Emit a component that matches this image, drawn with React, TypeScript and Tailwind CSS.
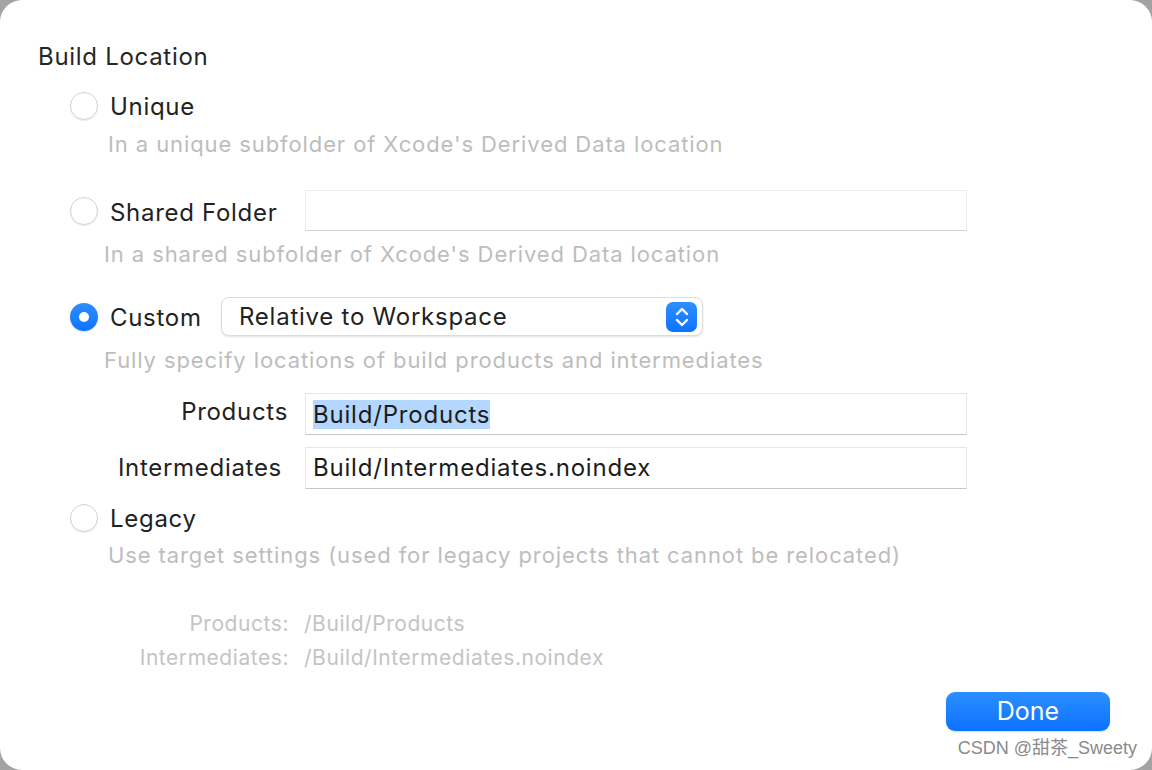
import React from 'react';

const font = { fontFamily: 'Inter, "Noto Sans", "Noto Sans CJK SC", sans-serif' };

const Radio = ({ checked = false }: { checked?: boolean }) =>
  checked ? (
    <div className="w-[28px] h-[28px] rounded-full bg-gradient-to-b from-[#2d8dff] to-[#0a74ff] flex items-center justify-center shrink-0 shadow-[0_1px_1px_rgba(0,0,0,0.15)]">
      <div className="w-[10px] h-[10px] rounded-full bg-white" />
    </div>
  ) : (
    <div className="w-[28px] h-[28px] rounded-full bg-white border border-[#d4d4d4] shrink-0 shadow-[0_1px_1px_rgba(0,0,0,0.08)]" />
  );

const Field = ({ children }: { children?: React.ReactNode }) => (
  <div className="w-[662px] h-[42px] bg-white border border-[#e6e6e6] border-b-[#c6c6c6] flex items-center px-[7px] text-[24px] tracking-[0.8px] text-[#1c1c1c]">
    {children}
  </div>
);

export default function App() {
  return (
    <div className="w-[1152px] h-[770px] bg-[#a3a3a3]" style={font}>
      <div className="relative w-full h-full bg-white rounded-[22px] overflow-hidden">
        <div className="pl-[38px] pt-[41px]">
          <div className="text-[24px] leading-[32px] tracking-[0.7px] text-[#262626]">Build Location</div>

          {/* Unique */}
          <div className="mt-[17px] ml-[32px] flex items-center gap-[12px] h-[32px]">
            <Radio />
            <span className="pt-[2px] text-[24px] tracking-[0.7px] text-[#222]">Unique</span>
          </div>
          <div className="mt-[8px] ml-[70px] text-[22px] leading-[28px] tracking-[0.9px] text-[#bdbdbd]">
            In a unique subfolder of Xcode's Derived Data location
          </div>

          {/* Shared */}
          <div className="mt-[32px] ml-[32px] flex items-center h-[41px]">
            <Radio />
            <span className="ml-[12px] w-[195px] pt-[5px] text-[24px] tracking-[0.7px] text-[#222]">Shared Folder</span>
            <div className="w-[662px] h-[41px] bg-white border border-[#ececec] border-b-[#d2d2d2]" />
          </div>
          <div className="mt-[9px] ml-[66px] text-[22px] leading-[28px] tracking-[0.9px] text-[#bdbdbd]">
            In a shared subfolder of Xcode's Derived Data location
          </div>

          {/* Custom */}
          <div className="mt-[29px] ml-[32px] flex items-center h-[39px]">
            <Radio checked />
            <span className="ml-[12px] w-[111px] pt-[3px] text-[24px] tracking-[0.7px] text-[#222]">Custom</span>
            <div className="w-[482px] h-[39px] bg-white rounded-[8px] border border-[#dcdcdc] shadow-[0_1px_2px_rgba(0,0,0,0.12)] flex items-center pl-[17px] pr-[5px]">
              <span className="flex-1 text-[24px] tracking-[0.75px] text-[#222]">Relative to Workspace</span>
              <div className="w-[31px] h-[30px] rounded-[7px] bg-gradient-to-b from-[#2e8fff] to-[#0a73ff] flex items-center justify-center">
                <svg width="16" height="22" viewBox="0 0 16 22" fill="none" stroke="white" strokeWidth="2.4" strokeLinecap="round" strokeLinejoin="round">
                  <path d="M3 8 L8 3 L13 8" />
                  <path d="M3 14 L8 19 L13 14" />
                </svg>
              </div>
            </div>
          </div>
          <div className="mt-[10px] ml-[66px] text-[22px] leading-[28px] tracking-[0.9px] text-[#bdbdbd]">
            Fully specify locations of build products and intermediates
          </div>

          {/* Products / Intermediates */}
          <div className="mt-[19px] flex items-center">
            <span className="w-[267px] pr-[17px] pb-[4px] text-right text-[24px] tracking-[0.7px] text-[#222]">Products</span>
            <Field>
              <span className="bg-[#b3d7ff] leading-[29px]">Build/Products</span>
            </Field>
          </div>
          <div className="mt-[12px] flex items-center">
            <span className="w-[267px] pr-[23px] text-right text-[24px] tracking-[0.7px] text-[#222]">Intermediates</span>
            <Field>Build/Intermediates.noindex</Field>
          </div>

          {/* Legacy */}
          <div className="mt-[13px] ml-[32px] flex items-center gap-[12px] h-[32px]">
            <Radio />
            <span className="pt-[2px] text-[24px] tracking-[0.7px] text-[#222]">Legacy</span>
          </div>
          <div className="mt-[7px] ml-[70px] text-[22px] leading-[28px] tracking-[0.9px] text-[#bdbdbd]">
            Use target settings (used for legacy projects that cannot be relocated)
          </div>

          {/* Info */}
          <div className="mt-[38px] grid grid-cols-[251px_1fr] gap-x-[15px] text-[21px] leading-[34px] tracking-[0.55px] text-[#c4c4c4]">
            <span className="text-right">Products:</span>
            <span>/Build/Products</span>
            <span className="text-right">Intermediates:</span>
            <span>/Build/Intermediates.noindex</span>
          </div>
        </div>

        {/* Footer */}
        <div className="absolute right-[42px] bottom-[39px]">
          <div className="w-[164px] h-[39px] rounded-[9px] bg-gradient-to-b from-[#2b8eff] to-[#0a72ff] flex items-center justify-center text-white text-[25px] shadow-[0_1px_2px_rgba(0,0,0,0.15)]">
            Done
          </div>
        </div>
        <div className="absolute right-[15px] bottom-[8px] text-[18px] text-[#8a8a8a]" style={{ fontFamily: '"Liberation Sans", "Noto Sans CJK SC", sans-serif' }}>
          CSDN @甜茶_Sweety
        </div>
      </div>
    </div>
  );
}
